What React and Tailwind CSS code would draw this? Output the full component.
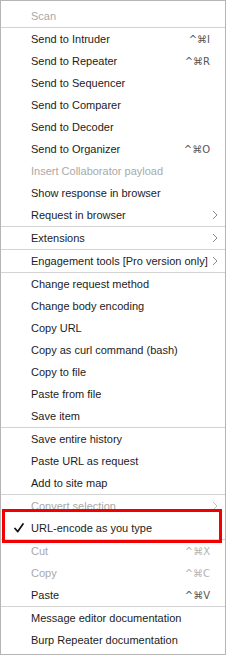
import React from "react";

const items = [
  { t: "Scan", d: true },
  "sep",
  { t: "Send to Intruder", k: "^⌘I" },
  { t: "Send to Repeater", k: "^⌘R" },
  { t: "Send to Sequencer" },
  { t: "Send to Comparer" },
  { t: "Send to Decoder" },
  { t: "Send to Organizer", k: "^⌘O" },
  { t: "Insert Collaborator payload", d: true },
  { t: "Show response in browser" },
  { t: "Request in browser", sub: true },
  "sep",
  { t: "Extensions", sub: true },
  "sep",
  { t: "Engagement tools [Pro version only]", sub: true },
  "sep",
  { t: "Change request method" },
  { t: "Change body encoding" },
  { t: "Copy URL" },
  { t: "Copy as curl command (bash)" },
  { t: "Copy to file" },
  { t: "Paste from file" },
  { t: "Save item" },
  "sep",
  { t: "Save entire history" },
  { t: "Paste URL as request" },
  { t: "Add to site map" },
  "sep",
  { t: "Convert selection", sub: true, d: true },
  { t: "URL-encode as you type", check: true },
  "sep",
  { t: "Cut", k: "^⌘X", d: true },
  { t: "Copy", k: "^⌘C", d: true },
  { t: "Paste", k: "^⌘V" },
  "sep",
  { t: "Message editor documentation" },
  { t: "Burp Repeater documentation" },
];

function Chevron({ d }) {
  return (
    <svg width="6" height="10" viewBox="0 0 6 10" className="shrink-0">
      <polyline
        points="1,1 5,5 1,9"
        fill="none"
        stroke={d ? "#c4c4c4" : "#8a8a8a"}
        strokeWidth="1"
      />
    </svg>
  );
}

function Check() {
  return (
    <svg width="10" height="10" viewBox="0 0 10 10" className="absolute left-[13px] top-[6px]">
      <path d="M1 5.5 L3.8 8.6 L9 1" fill="none" stroke="#111" strokeWidth="1.7" strokeLinecap="round" strokeLinejoin="round" />
    </svg>
  );
}

export default function App() {
  return (
    <div
      className="relative w-[226px] h-[655px] bg-white border border-[#b5b5b5] pt-[4px] flex flex-col overflow-hidden"
      style={{ fontFamily: '"Liberation Sans", Arial, sans-serif' }}
    >
      {items.map((it, i) =>
        it === "sep" ? (
          <div key={i} className="h-px bg-[#d3d3d3] shrink-0" />
        ) : (
          <div
            key={i}
            className={`relative h-[22px] shrink-0 flex items-center pl-[30px] pr-[7px] text-[11px] ${
              it.d ? "text-[#a9a9a9]" : "text-[#1c1c1c]"
            }`}
          >
            {it.check && <Check />}
            <span className="flex-1 whitespace-nowrap">{it.t}</span>
            {it.k && (
              <span
                className={`text-[10px] pr-[8px] ${it.d ? "text-[#b3b3b3]" : "text-[#555555]"}`}
                style={{ fontFamily: '"DejaVu Sans", "Liberation Sans", sans-serif' }}
              >
                {it.k}
              </span>
            )}
            {it.sub && <Chevron d={it.d} />}
          </div>
        )
      )}
      <div className="absolute left-[1px] top-[508px] w-[220px] h-[34px] border-[3px] border-[#f00000]" />
    </div>
  );
}
